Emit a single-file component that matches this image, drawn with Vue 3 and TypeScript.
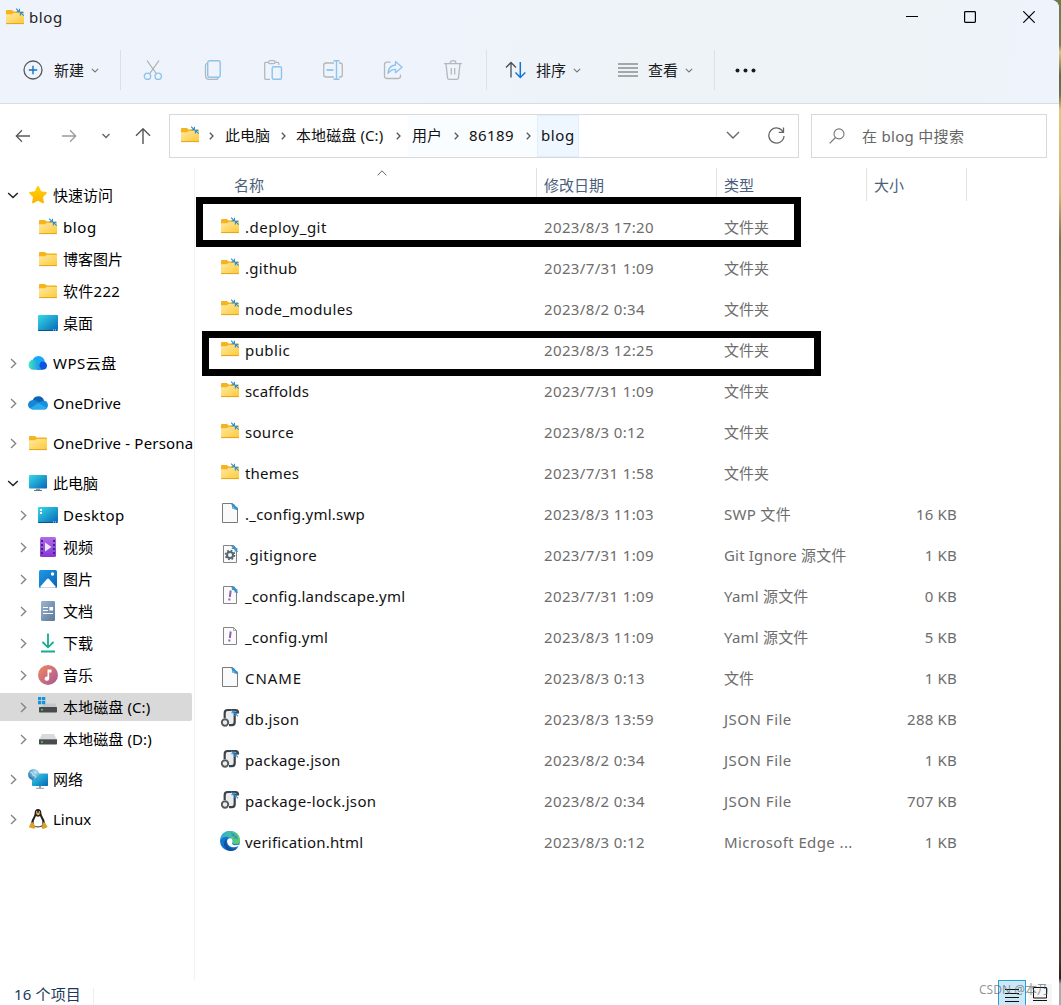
<script setup lang="ts">
interface NavItem {
  label: string
  icon: string
  level: number
  open?: boolean
  leaf?: boolean
  gap?: boolean
  active?: boolean
  spacing?: number
}
interface FileItem {
  name: string
  icon: string
  date: string
  type: string
  size?: string
  spacing?: number
  typeSpacing?: number
}

const tools = ['cut', 'copy', 'paste', 'rename', 'share', 'trash']

const crumbs = [
  { label: '此电脑', width: 53, sep: 18 },
  { label: '本地磁盘 (C:)', width: 97, sep: 19, spacing: 0.1 },
  { label: '用户', width: 39, sep: 18, tint: true },
  { label: '86189', width: 54, sep: 18, tint: true, spacing: 0.4 },
  { label: 'blog', width: 42, sep: 0, current: true, spacing: 0.6 },
]

const nav: NavItem[] = [
  { label: '快速访问', icon: 'star', level: 0, open: true },
  { label: 'blog', icon: 'folder-sync', level: 1, leaf: true, spacing: 0.6 },
  { label: '博客图片', icon: 'folder', level: 1, leaf: true },
  { label: '软件222', icon: 'folder', level: 1, leaf: true, spacing: 0.3 },
  { label: '桌面', icon: 'desk', level: 1, leaf: true },
  { label: 'WPS云盘', icon: 'wps', level: 0, gap: true, spacing: 0.5 },
  { label: 'OneDrive', icon: 'onedrive', level: 0, gap: true, spacing: 0.2 },
  { label: 'OneDrive - Persona', icon: 'folder', level: 0, gap: true, spacing: 0.2 },
  { label: '此电脑', icon: 'pc', level: 0, gap: true, open: true },
  { label: 'Desktop', icon: 'desktop', level: 1, spacing: 0.5 },
  { label: '视频', icon: 'video', level: 1 },
  { label: '图片', icon: 'picture', level: 1 },
  { label: '文档', icon: 'document', level: 1 },
  { label: '下载', icon: 'download', level: 1 },
  { label: '音乐', icon: 'music', level: 1 },
  { label: '本地磁盘 (C:)', icon: 'drive-c', level: 1, active: true, spacing: 0.1 },
  { label: '本地磁盘 (D:)', icon: 'drive', level: 1, spacing: 0.1 },
  { label: '网络', icon: 'network', level: 0, gap: true },
  { label: 'Linux', icon: 'linux', level: 0, gap: true },
]

const files: FileItem[] = [
  { name: '.deploy_git', icon: 'folder-sync', date: '2023/8/3 17:20', type: '文件夹', spacing: 0.5 },
  { name: '.github', icon: 'folder-sync', date: '2023/7/31 1:09', type: '文件夹', spacing: 0.3 },
  { name: 'node_modules', icon: 'folder-sync', date: '2023/8/2 0:34', type: '文件夹', spacing: 0.35 },
  { name: 'public', icon: 'folder-sync', date: '2023/8/3 12:25', type: '文件夹', spacing: 0.4 },
  { name: 'scaffolds', icon: 'folder-sync', date: '2023/7/31 1:09', type: '文件夹', spacing: 0.17 },
  { name: 'source', icon: 'folder-sync', date: '2023/8/3 0:12', type: '文件夹', spacing: 0.3 },
  { name: 'themes', icon: 'folder-sync', date: '2023/7/31 1:58', type: '文件夹', spacing: 0.2 },
  { name: '._config.yml.swp', icon: 'file', date: '2023/8/3 11:03', type: 'SWP 文件', size: '16 KB', spacing: 0.23, typeSpacing: 0.3 },
  { name: '.gitignore', icon: 'gear', date: '2023/7/31 1:09', type: 'Git Ignore 源文件', size: '1 KB', spacing: 0.37, typeSpacing: 0.18 },
  { name: '_config.landscape.yml', icon: 'yml-sync', date: '2023/7/31 1:09', type: 'Yaml 源文件', size: '0 KB', spacing: 0.24, typeSpacing: 0.2 },
  { name: '_config.yml', icon: 'yml', date: '2023/8/3 11:09', type: 'Yaml 源文件', size: '5 KB', spacing: 0.28, typeSpacing: 0.2 },
  { name: 'CNAME', icon: 'file', date: '2023/8/3 0:13', type: '文件', size: '1 KB', spacing: 0.9 },
  { name: 'db.json', icon: 'json', date: '2023/8/3 13:59', type: 'JSON File', size: '288 KB', spacing: 0.35, typeSpacing: 0.5 },
  { name: 'package.json', icon: 'json', date: '2023/8/2 0:34', type: 'JSON File', size: '1 KB', spacing: 0.27, typeSpacing: 0.5 },
  { name: 'package-lock.json', icon: 'json', date: '2023/8/2 0:34', type: 'JSON File', size: '707 KB', spacing: 0.36, typeSpacing: 0.5 },
  { name: 'verification.html', icon: 'edge', date: '2023/8/3 0:12', type: 'Microsoft Edge ...', size: '1 KB', spacing: 0.19, typeSpacing: 0.4 },
]

const ls = (n?: number) => ({ letterSpacing: (n ?? 0) + 'px' })
</script>

<template>
  <div class="screen">
    <svg class="defs" width="0" height="0" aria-hidden="true">
      <defs>
        <linearGradient id="gFolder" x1="0" y1="0" x2="1" y2="1"><stop offset="0" stop-color="#ffe9a2" /><stop offset="1" stop-color="#fdc936" /></linearGradient>
        <linearGradient id="gStar" x1="0" y1="0" x2="0" y2="1"><stop offset="0" stop-color="#ffd00a" /><stop offset="1" stop-color="#fbb400" /></linearGradient>
        <linearGradient id="gScreen" x1="0" y1="0" x2="1" y2="1"><stop offset="0" stop-color="#35dbe8" /><stop offset="1" stop-color="#0864b8" /></linearGradient>
        <linearGradient id="gVideo" x1="0" y1="0" x2="0" y2="1"><stop offset="0" stop-color="#b06bea" /><stop offset="1" stop-color="#8337d8" /></linearGradient>
        <linearGradient id="gPic" x1="0" y1="0" x2="1" y2="1"><stop offset="0" stop-color="#1c9be8" /><stop offset="1" stop-color="#0c62b4" /></linearGradient>
        <linearGradient id="gDoc" x1="0" y1="0" x2="1" y2="1"><stop offset="0" stop-color="#9bb5d0" /><stop offset="1" stop-color="#5b7899" /></linearGradient>
        <linearGradient id="gMusic" x1="0" y1="0" x2="1" y2="1"><stop offset="0" stop-color="#f3895b" /><stop offset="1" stop-color="#a4569b" /></linearGradient>
        <linearGradient id="gWps" x1="0" y1="0" x2="1" y2="0"><stop offset="0" stop-color="#3ee8c0" /><stop offset="1" stop-color="#1b84f0" /></linearGradient>
        <linearGradient id="gEdge" x1="0" y1="0" x2="1" y2="0"><stop offset="0" stop-color="#2aa9e8" /><stop offset="1" stop-color="#63d45b" /></linearGradient>
        <radialGradient id="gGlobe" cx=".65" cy=".3" r=".8"><stop offset="0" stop-color="#c4e8f6" /><stop offset=".55" stop-color="#58a8d2" /><stop offset="1" stop-color="#1d6b9c" /></radialGradient>

        <symbol id="sync" viewBox="0 0 9 9">
          <path d="M.5.8 3.7 4M4 1v3.2H1M8.5 8.3 5.3 5M5 8V4.8h3" fill="none" stroke="#2c8fd4" stroke-width="1.15" />
        </symbol>
        <symbol id="i-folder" viewBox="0 0 20 20">
          <path d="M1 4q0-1 1-1h5l1.6 1.6H18q1 0 1 1V9H1z" fill="#f5b31d" />
          <path d="M1 8q0-.7.8-.7H7L8.6 6H18.4q.6 0 .6.6V16.4q0 .6-.6.6H1.6q-.6 0-.6-.6z" fill="url(#gFolder)" />
          <path d="M1.2 16.6H18.8" stroke="#e5a21a" />
        </symbol>
        <symbol id="i-folder-sync" viewBox="0 0 20 20">
          <use href="#i-folder" width="20" height="20" />
          <path d="M12 2h7v4h-5z" fill="#fff" opacity=".25" />
          <use href="#sync" x="10.6" y=".8" width="8.6" height="8.6" />
        </symbol>
        <symbol id="i-star" viewBox="0 0 20 20">
          <path d="M10 .9q.6 0 .9.7l2.2 4.7 5 .7q1.4.3.5 1.4L15 12.1l.9 5.2q.1 1.4-1.2.9L10 15.8l-4.7 2.4q-1.3.5-1.2-.9l.9-5.2L1.4 8.4Q.5 7.3 1.9 7l5-.7 2.2-4.7q.3-.7.9-.7z" fill="url(#gStar)" />
        </symbol>
        <symbol id="i-desk" viewBox="0 0 20 20">
          <rect x="0" y="2" width="20" height="16" rx="1" fill="url(#gScreen)" />
          <path d="M0 17h20v.2q0 .8-.8.8H.8Q0 18 0 17.200z" fill="#075489" />
          <path d="M15 17h1M17 17h1M19 17h.6" stroke="#d7f1ff" />
        </symbol>
        <symbol id="i-desktop" viewBox="0 0 20 20">
          <use href="#i-desk" width="20" height="20" />
          <path d="M2 5h2M2 8h2" stroke="#fff" stroke-width="2" />
        </symbol>
        <symbol id="i-wps" viewBox="0 0 20 20">
          <circle cx="10.5" cy="9.2" r="6.2" fill="#18a8f8" />
          <path d="M9 16.8 13 8.5q5.500-.8 6 3.800.2 4-4 4.500z" fill="#0f55dc" />
          <path d="M5 6.700q3.500-.5 5 3.300l3.500 6.800H5.300Q.6 16.400.6 11.700.7 7.500 5 6.700z" fill="url(#gWps)" />
        </symbol>
        <symbol id="i-onedrive" viewBox="0 0 20 20">
          <path d="M4.500 7.500Q6 3.200 10.500 3.200q4.500.2 5.500 4.500L12 12z" fill="#0e62b8" />
          <path d="M0 12q.3-4.600 5-5 3 0 5.500 2L15 13l-10 3.200Q.3 16 0 12z" fill="#1585d6" />
          <path d="M10.500 9.500 15.700 7.500q4 .3 4.300 4.500-.2 4-3.700 4.500z" fill="#1490df" />
          <path d="M2 15.300 10.300 10l8.900 5q-1 1.700-3.200 1.700H5q-2 0-3-1.400z" fill="#2aaaed" />
        </symbol>
        <symbol id="i-pc" viewBox="0 0 20 20">
          <rect x="1" y="2" width="18" height="13.500" rx=".8" fill="url(#gScreen)" />
          <path d="M8 15.500h4v1.500H8z" fill="#8d99a3" /><path d="M6 17.500h8" stroke="#687580" />
        </symbol>
        <symbol id="i-video" viewBox="0 0 20 20">
          <rect x="2" y="0" width="16" height="20" rx="1.500" fill="url(#gVideo)" />
          <path d="M3 3h2v2H3zM3 7h2v2H3zM3 11h2v2H3zM3 15h2v2H3zM15 3h2v2h-2zM15 7h2v2h-2zM15 11h2v2h-2zM15 15h2v2h-2z" fill="#49227c" />
          <path d="M7 5.600v9L13.500 10z" fill="#f0e5fb" />
        </symbol>
        <symbol id="i-picture" viewBox="0 0 20 20">
          <rect x="1" y="1" width="18" height="18" rx="1.500" fill="url(#gPic)" />
          <path d="m2 18 7-8q1-1 2 0l7 8q-.5.800-1.500.800H3.500Q2.500 18.800 2 18z" fill="#fff" /><circle cx="14.500" cy="5" r="1.700" fill="#fff" />
        </symbol>
        <symbol id="i-document" viewBox="0 0 20 20">
          <rect x="3" y="0" width="14" height="20" rx="1.300" fill="url(#gDoc)" />
          <path d="M5 6.500h5M5 9.500h5M5 12.500h10M12 6.500h2.500v2.500H12z" stroke="#fff" stroke-width="1.200" fill="#fff" />
        </symbol>
        <symbol id="i-download" viewBox="0 0 20 20">
          <path d="M10 .5V14M4.500 9l5.500 5.300L15.500 9M3 18.500h14" stroke="#15ad8e" stroke-width="1.800" fill="none" />
        </symbol>
        <symbol id="i-music" viewBox="0 0 20 20">
          <circle cx="10" cy="10" r="10" fill="url(#gMusic)" />
          <path d="M9.500 4.500h4v3h-2.300v6.200a2.300 2.100 0 1 1-1.700-2z" fill="#fff" />
        </symbol>
        <symbol id="i-drive" viewBox="0 0 20 20">
          <path d="M4 5h12l3 6H1z" fill="#d8dade" /><rect x="1" y="10" width="18" height="5.500" rx=".7" fill="#484a4c" />
          <path d="M1 10.500h18" stroke="#77797b" /><path d="M3 13h2" stroke="#3fe04b" stroke-width="1.500" />
        </symbol>
        <symbol id="i-drive-c" viewBox="0 0 20 20">
          <path d="M7 6.500h10l2 4H2z" fill="#c5c7ca" /><rect x="1" y="10" width="18" height="5.500" rx=".7" fill="#484a4c" />
          <path d="M3 12.800h2" stroke="#3fe04b" stroke-width="1.500" />
          <path d="M0 0h3.300v3.300H0zM4 0h3.300v3.300H4zM0 4h3.300v3.300H0zM4 4h3.300v3.300H4z" fill="#1693dc" />
        </symbol>
        <symbol id="i-network" viewBox="0 0 20 20">
          <rect x="4" y="4.500" width="16" height="12.500" rx=".8" fill="url(#gScreen)" />
          <path d="M11 17h2v2h-2z" fill="#8d99a3" /><path d="M8 19.300h8" stroke="#8d99a3" />
          <circle cx="5.600" cy="5.500" r="5.500" fill="url(#gGlobe)" />
          <path d="M1.500 3q3 0 3 2t2.500 2-1 3.500" stroke="#e4f5fc" stroke-width="1" fill="none" opacity=".7" />
        </symbol>
        <symbol id="i-linux" viewBox="0 0 20 20">
          <path d="M10 0q3.200.2 3.300 3.800 0 2.400 1.700 4.700 2.500 4 1.500 8.500L10 18.500 3.500 17q-1-4.500 1.700-8.500Q6.800 6 6.700 3.800 6.800.2 10 0z" fill="#211f1e" />
          <path d="M8 7q2 1.500 4 0 3 4.500 2.400 9-4.400 3-8.800 0Q5 11.500 8 7z" fill="#fff" />
          <path d="M7.800 4.700 10 3.500l2.500 1.200L10 6.500z" fill="#edb52b" />
          <circle cx="8.700" cy="3" r=".7" fill="#fff" /><circle cx="11.300" cy="3" r=".7" fill="#fff" />
          <path d="m4.500 13 3 4.500q.3 1.800-1.500 2.300l-4.500-1.300q-1-.8 0-1.800L2.300 14.500zM15.500 13l2.500 1.700.7 1.800 1 1.500-4.200 2q-2 0-1.800-2z" fill="#d9a227" />
        </symbol>
        <symbol id="i-file" viewBox="0 0 20 20">
          <path d="M2.500.5h10l5 5v14h-15z" fill="#fafafa" stroke="#7b7b7b" /><path d="M12.500.5v5h5" fill="#e3e6e8" stroke="#8a8a8a" stroke-width=".7" />
          <use href="#sync" x="11.200" y=".7" width="7" height="7" /><path d="m12 1 5.500 5.500" stroke="#2f91d7" stroke-width="2" />
        </symbol>
        <symbol id="sheet" viewBox="0 0 20 20"><path d="M3.500 1.500h10l3 3v14h-13z" fill="#fbfbfb" stroke="#858585" /><path d="M13.500 1.500v3h3" fill="none" stroke="#858585" stroke-width=".7" /></symbol>
        <symbol id="i-yml" viewBox="0 0 20 20">
          <use href="#sheet" width="20" height="20" />
          <path d="M10.700 5.500 9.800 12M9.500 13.500 9.200 15.500" stroke="#9462b4" stroke-width="2" />
        </symbol>
        <symbol id="i-yml-sync" viewBox="0 0 20 20">
          <use href="#i-yml" width="20" height="20" /><use href="#sync" x="11" y="1" width="7.500" height="7.500" /><path d="m12 2 5 5" stroke="#2f91d7" stroke-width="1.800" />
        </symbol>
        <symbol id="i-gear" viewBox="0 0 20 20">
          <use href="#sheet" width="20" height="20" />
          <circle cx="10" cy="11" r="4.500" fill="none" stroke="#56676f" stroke-width="1.700" stroke-dasharray="1.770 1.770" />
          <circle cx="10" cy="11" r="3" fill="none" stroke="#56676f" stroke-width="2" />
          <use href="#sync" x="11" y="1" width="7.500" height="7.500" /><path d="m12 2 5 5" stroke="#2f91d7" stroke-width="1.500" />
        </symbol>
        <symbol id="i-json" viewBox="0 0 20 20">
          <path d="M6 3h9v14H7z" fill="#e9ebee" />
          <path d="M4.700 10V5q0-3 3-3h8q2.300 0 2.300 2.500H14.700V14q0 3.200-2.700 3.200H9" fill="none" stroke="#3d4246" stroke-width="2.200" />
          <circle cx="5" cy="14.500" r="3.200" fill="#eee" stroke="#55595c" stroke-width="1.900" />
          <use href="#sync" x="10.500" y="1" width="8" height="8" />
        </symbol>
        <symbol id="i-edge" viewBox="0 0 20 20">
          <circle cx="10" cy="10" r="10" fill="#1474c8" />
          <path d="M0 9Q1 0 10.300 0 19 .4 20 8.500q.3 4.500-4.500 4.800-3 0-3.500-1.300 1.500-2.500-.8-4.500Q5 3.500 0 9z" fill="url(#gEdge)" />
          <path d="M7.500 7.500q-3 5 1.500 8.800 4 2.700 9 .2-3 4-8 3.500-5-.8-6-6 0-5 3.500-6.500z" fill="#1150a0" />
          <path d="M11.500 7.500q-4-1-4.500 3 .8 5.800 7 5.800 3 0 5-1.800.4-1-.8-.7-5.800 1.500-6.300-1.600 1.700-2.200-.4-4.700z" fill="#fff" />
          <use href="#sync" x="10.500" y="1" width="8" height="8" />
        </symbol>

        <symbol id="t-cut" viewBox="0 0 20 20"><path d="M4 .5 13.200 13.500M16 .5 6.800 13.500" stroke="#a9adb2" stroke-width="1.200" fill="none" /><g fill="none" stroke="#8cc4ee" stroke-width="1.400"><circle cx="4.500" cy="16.300" r="3.200" /><circle cx="15.200" cy="16.300" r="3.200" /></g></symbol>
        <symbol id="t-copy" viewBox="0 0 20 20"><path d="M4 3.300q-1.500.5-1.500 2.200v9.500q0 4.500 4.500 4.500h6q1.600 0 2.200-1.500" stroke="#b4b8bc" stroke-width="1.300" fill="none" /><rect x="4.700" y=".7" width="12.500" height="16.500" rx="2" fill="none" stroke="#8cc4ee" stroke-width="1.400" /></symbol>
        <symbol id="t-paste" viewBox="0 0 20 20"><path d="M7 19.300H3q-1.300 0-1.300-1.300V3.500q0-1.200 1.300-1.200h2.500M12 2.300h2.500q1.300 0 1.300 1.500V5" stroke="#b4b8bc" stroke-width="1.300" fill="none" /><rect x="5.500" y=".7" width="6.500" height="3" rx="1.500" fill="none" stroke="#b4b8bc" stroke-width="1.300" /><rect x="9.200" y="6.700" width="9.300" height="12.600" rx="1.500" fill="none" stroke="#8cc4ee" stroke-width="1.400" /></symbol>
        <symbol id="t-rename" viewBox="0 0 20 20"><path d="M11 17H3q-2.300 0-2.300-2.300V5.300Q.7 3 3 3h8M16 3h1.200q2.100 0 2.100 2.300v9.400q0 2.300-2.100 2.300H16" stroke="#b4b8bc" stroke-width="1.300" fill="none" /><path d="M13.500 1v18M10.500.7h6M10.500 19.300h6" stroke="#8cc4ee" stroke-width="1.400" /><path d="M3.500 10h7" stroke="#8cc4ee" stroke-width="1.800" /></symbol>
        <symbol id="t-share" viewBox="0 0 20 20"><path d="M7.500 2.200H4q-2.500 0-2.500 2.500V16q0 2.500 2.500 2.500h11q2.500 0 2.500-2.500v-1.500" stroke="#b4b8bc" stroke-width="1.300" fill="none" /><path d="M12.500 1.500 19 7.200l-6.500 5.500V9.300Q8 9.200 5 13.500 5.500 5.500 12.500 5z" stroke="#8cc4ee" stroke-width="1.300" fill="none" stroke-linejoin="round" /></symbol>
        <symbol id="t-trash" viewBox="0 0 20 20"><path d="M1 3.700h18M7 3.500q0-2.800 3-2.800t3 2.800M3 3.700l1.500 14q.2 1.600 1.800 1.600h7.400q1.600 0 1.800-1.600L17 3.700M8.300 8v6.500M11.700 8v6.500" stroke="#b4b8bc" stroke-width="1.300" fill="none" /></symbol>
      </defs>
    </svg>

    <div class="window">
      <header class="top">
        <div class="titlebar">
          <svg class="ico"><use href="#i-folder-sync" /></svg>
          <span class="title">blog</span>
          <div class="winbtns">
            <svg width="12" height="12" viewBox="0 0 12 12"><path d="M0 5.500h12" stroke="#000" /></svg>
            <svg width="12" height="12" viewBox="0 0 12 12"><rect x=".6" y=".6" width="10.800" height="10.800" rx=".8" stroke="#000" stroke-width="1.200" fill="none" /></svg>
            <svg width="12" height="12" viewBox="0 0 12 12"><path d="m.3.300 11.400 11.400M11.700.300.300 11.700" stroke="#000" stroke-width="1.200" /></svg>
          </div>
        </div>
        <div class="toolbar">
          <button class="cmd new">
            <svg width="20" height="20" viewBox="0 0 20 20"><circle cx="10" cy="10" r="9" stroke="#55585c" stroke-width="1.300" fill="none" /><path d="M10 5.800v8.400M5.800 10h8.400" stroke="#1272c4" stroke-width="1.400" /></svg>
            <span>新建</span>
            <svg class="chev" viewBox="0 0 8 5"><path d="m.8.800 3.200 3.200L7.200.8" /></svg>
          </button>
          <i class="bar"></i>
          <div class="tools"><svg v-for="t in tools" :key="t" class="ico"><use :href="'#t-' + t" /></svg></div>
          <i class="bar"></i>
          <button class="cmd sort">
            <svg width="22" height="18" viewBox="0 0 22 18"><path d="M6 16.500V1.500M1 6.500l5-5 5 5" stroke="#4b4e52" stroke-width="1.300" fill="none" /><path d="M15.300 1v15.500M10.500 11.500l4.800 5 5-5" stroke="#0f78d4" stroke-width="1.500" fill="none" /></svg>
            <span>排序</span>
            <svg class="chev" viewBox="0 0 8 5"><path d="m.8.800 3.200 3.200L7.200.8" /></svg>
          </button>
          <button class="cmd view">
            <svg width="20" height="14" viewBox="0 0 20 14"><path d="M0 1h20M0 5h20M0 9h20M0 13h20" stroke="#5a5d61" stroke-width="1.200" /></svg>
            <span>查看</span>
            <svg class="chev" viewBox="0 0 8 5"><path d="m.8.800 3.200 3.200L7.200.8" /></svg>
          </button>
          <i class="bar"></i>
          <svg class="dots" width="21" height="5" viewBox="0 0 21 5"><circle cx="2.500" cy="2.500" r="2" /><circle cx="10.500" cy="2.500" r="2" /><circle cx="18.500" cy="2.500" r="2" /></svg>
        </div>
      </header>

      <div class="address-row">
        <div class="arrows">
          <svg width="16" height="14" viewBox="0 0 16 14"><path d="M15 7H1.500M7 1.300 1.300 7 7 12.700" stroke="#5a5a5a" stroke-width="1.300" fill="none" /></svg>
          <svg width="16" height="14" viewBox="0 0 16 14"><path d="M1 7h13.500M9 1.300 14.700 7 9 12.700" stroke="#9b9b9b" stroke-width="1.300" fill="none" /></svg>
          <svg width="8" height="6" viewBox="0 0 8 6"><path d="m.5 1 3.500 3.500L7.500 1" stroke="#666" stroke-width="1.400" fill="none" /></svg>
          <svg width="16" height="16" viewBox="0 0 16 16"><path d="M8 16V1M1 7.800l7-7 7 7" stroke="#555" stroke-width="1.400" fill="none" /></svg>
        </div>
        <div class="address">
          <svg class="ico"><use href="#i-folder-sync" /></svg>
          <svg class="sep first" viewBox="0 0 5 8"><path d="m.8.800 3.200 3.200L.8 7.200" /></svg>
          <template v-for="c in crumbs" :key="c.label">
            <span class="crumb" :class="{ tint: c.tint, current: c.current }" :style="{ width: c.width + 'px', ...ls(c.spacing) }">{{ c.label }}</span>
            <span v-if="c.sep" class="sepbox" :class="{ tint: c.tint }" :style="{ width: c.sep + 'px' }"><svg class="sep" viewBox="0 0 5 8"><path d="m.8.800 3.200 3.200L.8 7.200" /></svg></span>
          </template>
          <div class="address-end">
            <svg width="14" height="8" viewBox="0 0 14 8"><path d="m1 1 6 6 6-6" stroke="#666" stroke-width="1.400" fill="none" /></svg>
            <svg width="17" height="17" viewBox="0 0 17 17"><path d="M15.300 5.300A7.600 7.600 0 1 0 16 9M15.500.500v4.800h-4.800" stroke="#666" stroke-width="1.300" fill="none" /></svg>
          </div>
        </div>
        <div class="search">
          <svg width="16" height="16" viewBox="0 0 16 16"><circle cx="10" cy="5.900" r="5" stroke="#777" stroke-width="1.100" fill="none" /><path d="M6.500 9.500.700 15.300" stroke="#777" stroke-width="1.200" /></svg>
          <span>在 blog 中搜索</span>
        </div>
      </div>

      <div class="body">
        <aside class="nav">
          <div v-for="(n, i) in nav" :key="i" class="nav-item" :class="{ child: n.level, gap: n.gap, active: n.active }">
            <span class="twist">
              <svg v-if="n.open" width="12" height="7" viewBox="0 0 12 7"><path d="m1.200 1 4.800 4.500L10.800 1" stroke="#222" stroke-width="1.500" fill="none" /></svg>
              <svg v-else-if="!n.leaf" width="7" height="11" viewBox="0 0 7 11"><path d="m1 1 4.700 4.500L1 10" stroke="#858585" stroke-width="1.400" fill="none" /></svg>
            </span>
            <svg class="ico"><use :href="'#i-' + n.icon" /></svg>
            <span class="label" :style="ls(n.spacing)">{{ n.label }}</span>
          </div>
        </aside>

        <main class="files">
          <div class="cols head">
            <span class="c-name">名称<svg width="10" height="6" viewBox="0 0 10 6"><path d="m.7 5.300 4.300-4.500 4.300 4.500" stroke="#666" fill="none" /></svg></span>
            <span>修改日期</span><span>类型</span><span>大小</span>
          </div>
          <div class="rows">
            <div v-for="f in files" :key="f.name" class="cols row">
              <span class="c-name"><svg class="ico"><use :href="'#i-' + f.icon" /></svg><span :style="ls(f.spacing)">{{ f.name }}</span></span>
              <span class="c-date">{{ f.date }}</span>
              <span class="c-type" :style="ls(f.typeSpacing)">{{ f.type }}</span>
              <span class="c-size">{{ f.size }}</span>
            </div>
          </div>
          <div class="mark mark-deploy"></div>
          <div class="mark mark-public"></div>
        </main>
      </div>

      <footer class="status">
        <span class="count">16 个项目</span>
        <div class="viewbtns">
          <span class="vb on"><svg width="14" height="15" viewBox="0 0 14 15"><path d="M0 1.500h14M0 5.500h14M0 9.500h14M0 13.500h14" stroke="#111" /></svg></span>
          <span class="vb"><svg width="14" height="15" viewBox="0 0 14 15"><path d="M.5.500h13v10.500H.5zM0 13.500h14" stroke="#111" fill="none" /></svg></span>
        </div>
        <span class="watermark">CSDN @本乃</span>
      </footer>
    </div>
  </div>
</template>

<style>
body { margin: 0; overflow: hidden; }
</style>

<style scoped>
.screen { width: 1061px; height: 1005px; overflow: hidden; background: linear-gradient(#6d7a4a 0, #77804f 45px, #d5c878 52px, #5e6b42 75px, #69734a 95px, #d9cb7b 110px, #cabb70 195px, #76784e 240px, #a09c65 400px, #5c5c3c 700px, #3a3a28 960px, #23231a 978px, #aaa 984px); font: 15px/20px "Noto Sans", "Noto Sans CJK SC", sans-serif; color: #111; }
.defs { position: absolute; }
.window { width: 1059px; height: 1005px; background: #fff; border-radius: 0 8px 0 0; display: flex; flex-direction: column; overflow: hidden; position: relative; }
svg { display: block; flex: none; }
.ico { width: 20px; height: 20px; }
.top { height: 103px; background: linear-gradient(100deg, #eff3fb 0, #eff3fb 40%, #edf3f7 65%, #edf3f7 85%, #eff3fc); border-bottom: 1px solid #d9dde2; }
.titlebar { height: 34px; display: flex; align-items: center; padding-left: 5px; }
.title { margin-left: 4px; letter-spacing: .6px; color: #222; }
.winbtns { margin-left: auto; margin-right: 24px; display: flex; }
.winbtns svg + svg { margin-left: 46px; }
.winbtns svg:last-child { margin-left: 47px; }
.toolbar { display: flex; align-items: center; height: 72px; }
.cmd { border: 0; padding: 0; background: none; font: inherit; color: #1a1a1a; display: flex; align-items: center; }
.chev { width: 8px; height: 5px; }
.chev path { fill: none; stroke: #777; stroke-width: 1.100; }
.new { width: 97px; margin-left: 23px; }
.new span { margin: 0 7px 0 11px; }
.bar { width: 1px; height: 40px; background: #dde1e6; }
.tools { display: flex; gap: 40px; margin: 0 23px 0 22px; }
.sort { margin-left: 18px; }
.sort span, .view span { margin: 0 7px 0 9px; }
.view { margin-left: 37px; }
.view span { margin-left: 10px; }
.view + .bar { margin-left: 21px; }
.dots { margin-left: 20px; fill: #1b1b1b; }
.address-row { display: flex; height: 64px; align-items: flex-start; padding-top: 10px; box-sizing: border-box; }
.arrows { display: flex; align-items: center; height: 44px; width: 169px; padding-left: 15px; box-sizing: border-box; }
.arrows svg:nth-child(2) { margin-left: 30px; }
.arrows svg:nth-child(3) { margin-left: 25px; }
.arrows svg:nth-child(4) { margin-left: 25px; }
.address, .search { box-sizing: border-box; height: 44px; border: 1px solid #d9d9d9; display: flex; align-items: center; }
.address { width: 630px; padding-left: 10px; }
.address > .ico { margin-top: -2px; }
.sep { width: 5px; height: 8px; }
.sep path { stroke: #555; stroke-width: 1.300; fill: none; }
.sep.first { margin: 0 7px 0 9px; }
.crumb { height: 42px; line-height: 40px; padding-left: 4px; box-sizing: border-box; white-space: nowrap; }
.sepbox { height: 42px; display: flex; align-items: center; justify-content: center; }
.tint { background: #fafdff; }
.current { background: #eef7ff; box-shadow: inset 0 0 0 1px #dfeffd; }
.address-end { margin-left: auto; display: flex; align-items: center; gap: 28px; margin: -2px 13px 0 auto; }
.search { margin-left: 12px; width: 236px; padding-left: 17px; color: #666; }
.search svg { margin-top: -1px; }
.search span { margin-left: 17px; letter-spacing: .3px; }
.body { display: flex; height: 812px; }
.nav { width: 195px; box-sizing: border-box; border-right: 1px solid #f2f2f2; padding-top: 13px; }
.nav-item { display: flex; align-items: center; height: 28px; width: 194px; margin: 0 0 4px; white-space: nowrap; color: #000; }
.nav-item.gap { margin-top: 12px; }
.nav-item.child { padding-left: 10px; box-sizing: border-box; }
.nav-item.active { width: 192px; background: #d9d9d9; border-radius: 0 2px 2px 0; }
.twist { width: 12px; margin: 0 9px 0 7px; display: flex; justify-content: center; flex: none; }
.label { margin-left: 5px; }
.files { position: relative; width: 864px; }
.cols { display: grid; grid-template-columns: 341px 180px 150px 100px; }
.head { height: 33px; color: #4c607a; }
.head > span { border-right: 1px solid #e2e2e2; padding: 7px 0 0 8px; height: 33px; box-sizing: border-box; }
.head .c-name { padding-left: 39px; position: relative; }
.head .c-name svg { position: absolute; left: 182px; top: 2px; }
.head > span:nth-child(1) { width: 342px; }
.head > span:nth-child(2) { width: 181px; }
.head > span:nth-child(3) { width: 151px; }
.head > span:nth-child(4) { width: 101px; }
.rows { padding-top: 5px; }
.row { height: 41px; align-items: center; color: #6d6d6d; white-space: nowrap; }
.row .c-name { display: flex; align-items: center; padding-left: 25px; color: #111; }
.row .c-name .ico { margin: -1px 5px 0 0; }
.c-date, .c-type { padding-left: 8px; }
.c-date { letter-spacing: .36px; }
.c-size { text-align: right; padding-right: 9px; letter-spacing: .2px; }
.mark { position: absolute; border: 7px solid #000; box-sizing: border-box; }
.mark-deploy { left: 1px; top: 29px; width: 605px; height: 50px; }
.mark-public { left: 7px; top: 163px; width: 619px; height: 45px; }
.status { display: flex; height: 25px; position: relative; }
.count { width: 94px; box-sizing: border-box; padding: 4px 0 0 14px; letter-spacing: .15px; color: #1e395b; background: linear-gradient(#eee, #eee) 93px 8px / 1px 20px no-repeat; }
.viewbtns { margin-left: auto; margin-right: 7px; display: flex; gap: 2px; }
.vb { width: 24px; height: 25px; display: flex; justify-content: center; padding-top: 7px; box-sizing: border-box; background: linear-gradient(#f5f5f5, #f5f5f5) 0 4px no-repeat; }
.vb.on { width: 28px; border: 1px solid #26a0da; border-bottom: 0; background: #cce8f7; }
.watermark { position: absolute; left: 979px; top: 0; font-size: 12px; color: rgba(90, 90, 90, .65); white-space: nowrap; }
</style>
